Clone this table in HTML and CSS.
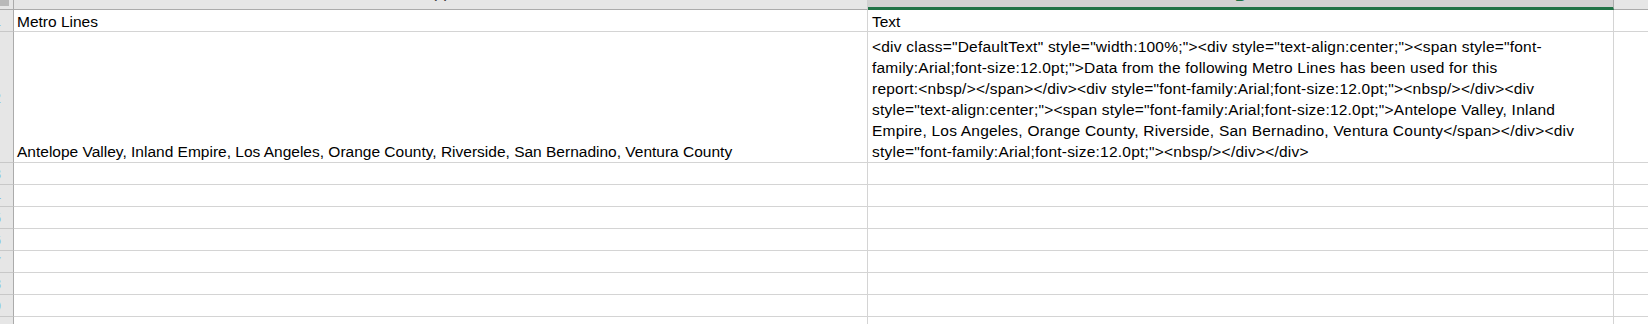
FILE: index.html
```html
<!DOCTYPE html>
<html>
<head>
<meta charset="utf-8">
<link rel="stylesheet" href="styles.css">
</head>
<body>
<div class="sheet">
  <div class="corner"><div class="tri"></div></div>
  <div class="colhead"><span class="colletter">A</span></div>
  <div class="colhead sel"><span class="colletter">B</span></div>
  <div class="colhead last"><span class="colletter">C</span></div>

  <div class="rowhead r1"><span class="rn">1</span></div>
  <div class="cell r1">Metro Lines</div>
  <div class="cell r1 b">Text</div>
  <div class="cell r1 last"></div>

  <div class="rowhead r2"><span class="rn">2</span></div>
  <div class="cell r2">Antelope Valley, Inland Empire, Los Angeles, Orange County, Riverside, San Bernadino, Ventura County</div>
  <div class="cell r2 b"><div class="wrap"><span class="ln">&lt;div class="DefaultText" style="width:100%;"&gt;&lt;div style="text-align:center;"&gt;&lt;span style="font-</span><span class="ln">family:Arial;font-size:12.0pt;"&gt;Data from the following Metro Lines has been used for this</span><span class="ln">report:&lt;nbsp/&gt;&lt;/span&gt;&lt;/div&gt;&lt;div style="font-family:Arial;font-size:12.0pt;"&gt;&lt;nbsp/&gt;&lt;/div&gt;&lt;div</span><span class="ln">style="text-align:center;"&gt;&lt;span style="font-family:Arial;font-size:12.0pt;"&gt;Antelope Valley, Inland</span><span class="ln">Empire, Los Angeles, Orange County, Riverside, San Bernadino, Ventura County&lt;/span&gt;&lt;/div&gt;&lt;div</span><span class="ln">style="font-family:Arial;font-size:12.0pt;"&gt;&lt;nbsp/&gt;&lt;/div&gt;&lt;/div&gt;</span></div></div>
  <div class="cell r2 last"></div>

  <div class="rowhead"><span class="rn">3</span></div><div class="cell"></div><div class="cell b"></div><div class="cell last"></div>
  <div class="rowhead"><span class="rn">4</span></div><div class="cell"></div><div class="cell b"></div><div class="cell last"></div>
  <div class="rowhead"><span class="rn">5</span></div><div class="cell"></div><div class="cell b"></div><div class="cell last"></div>
  <div class="rowhead"><span class="rn">6</span></div><div class="cell"></div><div class="cell b"></div><div class="cell last"></div>
  <div class="rowhead"><span class="rn">7</span></div><div class="cell"></div><div class="cell b"></div><div class="cell last"></div>
  <div class="rowhead"><span class="rn">8</span></div><div class="cell"></div><div class="cell b"></div><div class="cell last"></div>
  <div class="rowhead"><span class="rn">9</span></div><div class="cell"></div><div class="cell b"></div><div class="cell last"></div>
  <div class="rowhead"><span class="rn">10</span></div><div class="cell"></div><div class="cell b"></div><div class="cell last"></div>
</div>
</body>
</html>
```

FILE: styles.css
```css
* { box-sizing: border-box; }
html, body {
  margin: 0;
  padding: 0;
  background: #ffffff;
  width: 1648px;
  height: 324px;
  overflow: hidden;
}
.sheet {
  display: grid;
  grid-template-columns: 14px 854px 746px 34px;
  grid-template-rows: 10px 22px 131px repeat(8, 22px);
  font-family: "Liberation Sans", Arial, sans-serif;
  font-size: 15.5px;
  color: #000;
}
.corner {
  background: #e6e6e6;
  border-right: 1px solid #ababab;
  border-bottom: 1px solid #ababab;
}
.tri {
  width: 9px;
  height: 6px;
  background: #b9b9b9;
}
.colhead {
  background: #e6e6e6;
  border-right: 1px solid #d0d0d0;
  border-bottom: 1px solid #ababab;
  overflow: hidden;
  display: flex;
  justify-content: center;
  align-items: flex-start;
}
.colhead.sel {
  background: #d2d2d2;
  border-bottom: 3px solid #217346;
  border-right: 1px solid #ababab;
}
.colhead.last { border-right: none; }
.colletter {
  display: block;
  font-size: 17px;
  line-height: 17px;
  margin-top: -13px;
  color: #444;
}
.sel .colletter { color: #217346; }
.last .colletter { margin-left: 60px; }
.rowhead {
  background: #e6e6e6;
  border-right: 1px solid #ababab;
  border-bottom: 1px solid #c8c8c8;
  overflow: hidden;
  display: flex;
  justify-content: flex-end;
  align-items: center;
  padding-right: 12px;
}
.rn {
  display: block;
  flex: none;
  font-size: 15px;
  line-height: 15px;
  color: #7fb8e6;
}
.cell {
  border-right: 1px solid #d4d4d4;
  border-bottom: 1px solid #d4d4d4;
  padding: 0 3px;
  display: flex;
  align-items: flex-end;
  line-height: 19px;
  white-space: nowrap;
}
.cell.b { padding-left: 4px; }
.cell.r2 { line-height: 21px; }
.cell.r2.b { letter-spacing: 0.22px; }
.cell.last { border-right: none; }
.wrap {
  display: flex;
  flex-direction: column;
}
.ln { display: block; white-space: pre; }
```
